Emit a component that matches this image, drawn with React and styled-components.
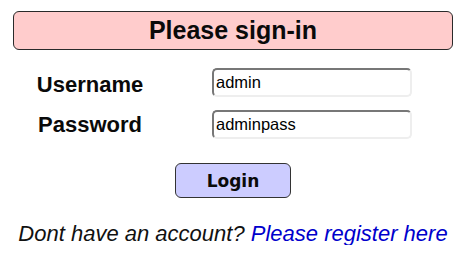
import { useState } from "react";
import styled, { createGlobalStyle } from "styled-components";

const GlobalStyle = createGlobalStyle`
  html, body {
    margin: 0;
    padding: 0;
    background: #ffffff;
  }
  body {
    font-family: "Liberation Sans", Arial, sans-serif;
    color: #000;
  }
`;

const Page = styled.div`
  width: 440px;
  margin-left: 13px;
  padding-top: 11px;
  display: flex;
  flex-direction: column;
  align-items: center;
`;

const Header = styled.div`
  box-sizing: border-box;
  width: 100%;
  height: 39px;
  background: #ffcccc;
  border: 1px solid #2a2a2a;
  border-radius: 6px;
  display: flex;
  align-items: center;
  justify-content: center;
`;

const Title = styled.h1`
  margin: 0;
  font-size: 25px;
  font-weight: bold;
  line-height: 1;
  color: #0a0a0a;
`;

const Form = styled.form`
  width: 100%;
  margin-top: 18px;
  display: grid;
  grid-template-columns: 154px 200px;
  column-gap: 45px;
  row-gap: 13px;
  align-items: center;
`;

const Label = styled.label`
  text-align: center;
  font-size: 22px;
  font-weight: bold;
  line-height: 1;
  color: #0a0a0a;
  transform: translateY(${({ $shift }) => $shift || 0}px);
`;

const Field = styled.input`
  box-sizing: border-box;
  width: 200px;
  height: 29px;
  padding: 0 2px;
  font-family: "Liberation Sans", Arial, sans-serif;
  font-size: 16.5px;
  color: #000;
  background: #fff;
  border-style: solid;
  border-width: 2px;
  border-color: #777 #eeeeee #eeeeee #777;
  border-radius: 5px;
  outline: none;
`;

const Button = styled.button`
  box-sizing: border-box;
  width: 116px;
  height: 35px;
  margin-top: 24px;
  background: #ccccff;
  border: 1px solid #333;
  border-radius: 6px;
  font-family: "DejaVu Sans", Verdana, sans-serif;
  font-size: 17px;
  font-weight: bold;
  color: #0a0a0a;
  cursor: pointer;
`;

const Footer = styled.p`
  margin: 25px 0 0;
  font-size: 22px;
  line-height: 22px;
  font-style: italic;
  color: #111;
  white-space: nowrap;
`;

const Link = styled.a`
  color: #0000cc;
  text-decoration: none;
`;

export default function App() {
  const [username, setUsername] = useState("admin");
  const [password, setPassword] = useState("adminpass");

  return (
    <>
      <GlobalStyle />
      <Page>
        <Header>
          <Title>Please sign-in</Title>
        </Header>
        <Form onSubmit={(e) => e.preventDefault()}>
          <Label htmlFor="username" $shift={2}>Username</Label>
          <Field
            id="username"
            value={username}
            onChange={(e) => setUsername(e.target.value)}
          />
          <Label htmlFor="password">Password</Label>
          <Field
            id="password"
            value={password}
            onChange={(e) => setPassword(e.target.value)}
          />
        </Form>
        <Button type="button">Login</Button>
        <Footer>
          Dont have an account? <Link href="#">Please register here</Link>
        </Footer>
      </Page>
    </>
  );
}
